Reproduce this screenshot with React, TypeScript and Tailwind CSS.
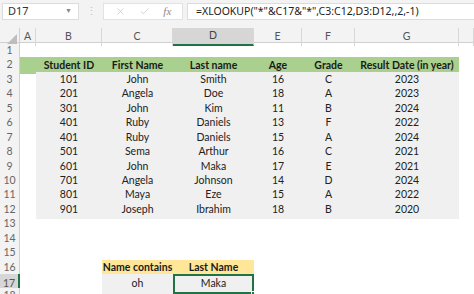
import React from 'react';
import { X, Check } from 'lucide-react';

const grid = 'grid grid-cols-[20px_16px_66px_71px_81px_48px_53px_104px_1fr]';
const cellFont = { fontFamily: 'Lato, "Open Sans", sans-serif' };

const students = [
  ['101', 'John', 'Smith', '16', 'C', '2023'],
  ['201', 'Angela', 'Doe', '18', 'A', '2023'],
  ['301', 'John', 'Kim', '11', 'B', '2024'],
  ['401', 'Ruby', 'Daniels', '13', 'F', '2022'],
  ['401', 'Ruby', 'Daniels', '15', 'A', '2024'],
  ['501', 'Sema', 'Arthur', '16', 'C', '2021'],
  ['601', 'John', 'Maka', '17', 'E', '2021'],
  ['701', 'Angela', 'Johnson', '14', 'D', '2024'],
  ['801', 'Maya', 'Eze', '15', 'A', '2022'],
  ['901', 'Joseph', 'Ibrahim', '18', 'B', '2020'],
];

const headers = ['Student ID', 'First Name', 'Last name', 'Age', 'Grade', 'Result Date (in year)'];

const RowHead: React.FC<{ n: number; active?: boolean }> = ({ n, active }) => (
  <div
    className={`flex items-center justify-center text-[10.5px] border-b border-[#dedede] ${
      active ? 'bg-[#d6d6d6] text-[#555] border-r-2 border-r-[#217346]' : 'bg-[#f3f3f3] text-[#666] border-r border-r-[#d0d0d0]'
    }`}
    style={cellFont}
  >
    {n}
  </div>
);

const Empty = () => <div />;

export default function App() {
  const rows: React.ReactNode[] = [];

  rows.push(
    <div key={1} className={`${grid} h-[14.45px]`}>
      <RowHead n={1} />
    </div>
  );

  rows.push(
    <div key={2} className={`${grid} h-[14.45px]`}>
      <RowHead n={2} />
      <div className="bg-[#a9d08e]" />
      {headers.map((h) => (
        <div key={h} className="bg-[#a9d08e] flex items-center justify-center font-bold text-[10.5px] text-[#1a1a1a] whitespace-nowrap" style={cellFont}>
          {h}
        </div>
      ))}
      <Empty />
    </div>
  );

  students.forEach((s, i) => {
    const last = i === students.length - 1;
    rows.push(
      <div key={i + 3} className={`${grid} h-[14.45px]`}>
        <RowHead n={i + 3} />
        <Empty />
        {s.map((v, j) => (
          <div
            key={j}
            className={`bg-[#f0f0f0] flex items-center justify-center text-[10.5px] text-[#222] ${last ? '' : 'border-b border-[#7f7f7f]'}`}
            style={cellFont}
          >
            {v}
          </div>
        ))}
        <Empty />
      </div>
    );
  });

  [13, 14, 15].forEach((n) =>
    rows.push(
      <div key={n} className={`${grid} h-[14.45px]`}>
        <RowHead n={n} />
      </div>
    )
  );

  rows.push(
    <div key={16} className={`${grid} h-[14.45px]`}>
      <RowHead n={16} />
      <Empty />
      <Empty />
      <div className="bg-[#ffe699] flex items-center justify-center font-bold text-[10.5px] text-[#1a1a1a] whitespace-nowrap" style={cellFont}>
        Name contains
      </div>
      <div className="bg-[#ffe699] flex items-center justify-center font-bold text-[10.5px] text-[#1a1a1a]" style={cellFont}>
        Last Name
      </div>
    </div>
  );

  rows.push(
    <div key={17} className={`${grid} h-[14.45px]`}>
      <RowHead n={17} active />
      <Empty />
      <Empty />
      <div className="bg-[#f0f0f0] flex items-center justify-center text-[10.5px] text-[#222]" style={cellFont}>
        oh
      </div>
      <div className="relative bg-[#f0f0f0] flex items-center justify-center text-[10.5px] text-[#222] border-2 border-[#217346]" style={cellFont}>
        Maka
        <span className="absolute -right-[3px] -bottom-[3px] w-[4px] h-[4px] bg-[#217346] border border-white" />
      </div>
    </div>
  );

  rows.push(
    <div key={18} className={`${grid} h-[14.45px]`}>
      <RowHead n={18} />
    </div>
  );

  return (
    <div className="w-[474px] h-[294px] overflow-hidden bg-white">
      {/* formula bar */}
      <div className="h-[28px] bg-[#f3f3f3] flex items-start pt-[3px] pl-[2px]" style={{ fontFamily: '"Noto Sans", "Open Sans", sans-serif' }}>
        <div className="w-[77px] h-[17px] bg-white border border-[#dcdcdc] flex items-center justify-between pl-[5px] pr-[6px] text-[11px] text-[#333]">
          <span>D17</span>
          <span className="text-[7px] text-[#888]">▼</span>
        </div>
        <div className="w-[24px] h-[17px] flex items-center justify-center text-[#c4c4c4] text-[11px]">⋮</div>
        <div className="w-[80px] h-[17px] bg-white border border-[#e2e2e2] flex items-center justify-around px-[4px]">
          <X size={11} strokeWidth={1.5} color="#c2c2c2" />
          <Check size={11} strokeWidth={1.5} color="#c2c2c2" />
          <span className="italic text-[11px] text-[#8a8a8a]" style={{ fontFamily: '"Liberation Serif", serif' }}>fx</span>
        </div>
        <div className="flex-1 ml-[4px] h-[17px] bg-white border border-[#dcdcdc] border-r-0 flex items-center pl-[8px] text-[10.5px] text-[#222] whitespace-nowrap">
          =XLOOKUP("*"&amp;C17&amp;"*",C3:C12,D3:D12,,2,-1)
        </div>
      </div>

      {/* column headers */}
      <div className={`${grid} h-[15px] bg-[#f3f3f3] text-[10.5px] text-[#555] border-b border-[#d0d0d0]`} style={cellFont}>
        <div className="relative border-r border-[#d0d0d0]">
          <svg className="absolute right-[2px] bottom-[2px]" width="10" height="10" viewBox="0 0 10 10">
            <polygon points="10,0 10,10 0,10" fill="#bdbdbd" />
          </svg>
        </div>
        {['A', 'B', 'C', 'D', 'E', 'F', 'G', ''].map((c) => (
          <div
            key={c}
            className={`flex items-center justify-center border-r border-[#d8d8d8] ${
              c === 'D' ? 'bg-[#d6d6d6] text-[#444] border-b-2 border-b-[#217346]' : ''
            }`}
          >
            {c}
          </div>
        ))}
      </div>

      {rows}
    </div>
  );
}
